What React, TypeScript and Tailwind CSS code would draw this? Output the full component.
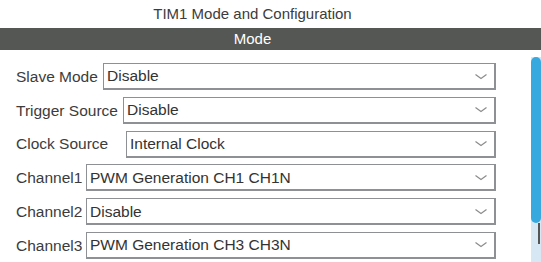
import React from "react";

const rows = [
  { label: "Slave Mode", value: "Disable", labelWidth: "w-[87px]" },
  { label: "Trigger Source", value: "Disable", labelWidth: "w-[107px]" },
  { label: "Clock Source", value: "Internal Clock", labelWidth: "w-[110px]" },
  { label: "Channel1", value: "PWM Generation CH1 CH1N", labelWidth: "w-[70px]" },
  { label: "Channel2", value: "Disable", labelWidth: "w-[70px]" },
  { label: "Channel3", value: "PWM Generation CH3 CH3N", labelWidth: "w-[70px]" },
];

const Chevron = () => (
  <svg width="12" height="7" viewBox="0 0 12 7" className="shrink-0">
    <path d="M0.5 1.5 L6 5.5 L11.5 1.5" fill="none" stroke="#8c8c8c" strokeWidth="1.2" />
  </svg>
);

const App = () => {
  return (
    <div
      className="w-[541px] h-[262px] overflow-hidden bg-white flex flex-col"
      style={{ fontFamily: '"Liberation Sans", Arial, sans-serif' }}
    >
      <div className="h-[28px] shrink-0 flex items-center justify-center pr-[36px] text-[15px] text-[#3c3c3c]">
        TIM1 Mode and Configuration
      </div>
      <div className="h-[22px] shrink-0 bg-[#555755] flex items-center justify-center pr-[36px] text-[15px] text-white">
        Mode
      </div>
      <div className="flex flex-1 min-h-0">
        <div className="flex-1 flex flex-col gap-[6.8px] pl-[16px] pr-[35px] pt-[13px]">
          {rows.map((row) => (
            <div key={row.label} className="flex items-center h-[27px] shrink-0">
              <span className={`${row.labelWidth} shrink-0 text-[15.5px] text-[#3c3c3c] whitespace-nowrap`}>
                {row.label}
              </span>
              <div className="flex-1 h-full flex items-center justify-between border-t border-l border-r-2 border-b-2 border-[#8e9194] pl-[3px] pr-[7px] text-[15.5px] text-[#333333]">
                <span className="whitespace-nowrap">{row.value}</span>
                <Chevron />
              </div>
            </div>
          ))}
        </div>
        <div className="w-[10px] shrink-0 pt-[7px] flex flex-col">
          <div className="flex-1 bg-[#d8e7f4] flex flex-col">
            <div className="h-[166px] bg-[#38a9de] rounded-t-[6px] rounded-b-[6px]" />
            <div className="flex justify-end">
              <div className="w-[2px] h-[21px] bg-[#555555] mr-[1px]" />
            </div>
          </div>
        </div>
      </div>
    </div>
  );
};

export default App;
